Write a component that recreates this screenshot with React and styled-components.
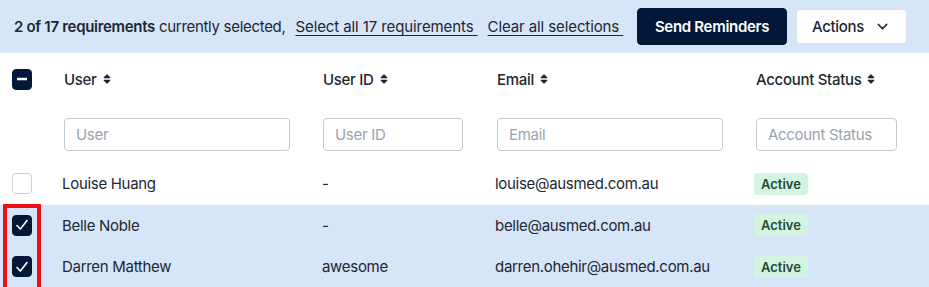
import React from "react";
import styled, { createGlobalStyle } from "styled-components";
import { FaSort } from "react-icons/fa";
import { FiChevronDown } from "react-icons/fi";

const Global = createGlobalStyle`
  html, body { margin: 0; padding: 0; background: #fff; }
  body {
    font-family: Inter, "Noto Sans", "Liberation Sans", sans-serif;
    color: #1e2633;
    letter-spacing: -0.3px;
    -webkit-font-smoothing: antialiased;
  }
`;

const Page = styled.div`
  width: 929px;
  height: 287px;
  overflow: hidden;
  position: relative;
`;

const SelectionBar = styled.div`
  display: flex;
  align-items: center;
  height: 53px;
  padding: 0 22px 0 14px;
  background: #d7e5f8;
  font-size: 15px;
  white-space: nowrap;
  & > * { flex-shrink: 0; }
`;

const Summary = styled.span`
  color: #1e2633;
  b { font-weight: 600; }
`;

const LinkText = styled.a`
  color: #1e2633;
  text-decoration: underline;
  text-underline-offset: 3px;
  white-space: pre;
  letter-spacing: -0.1px;
  margin-left: ${(p) => p.$gap || 0}px;
  cursor: pointer;
`;

const Spacer = styled.div`
  flex: 1;
`;

const Button = styled.button`
  display: flex;
  align-items: center;
  justify-content: center;
  gap: 10px;
  box-sizing: border-box;
  width: ${(p) => p.$w}px;
  height: ${(p) => (p.$primary ? 37 : 35)}px;
  margin-left: ${(p) => p.$gap || 0}px;
  border-radius: 4px;
  font-family: inherit;
  letter-spacing: inherit;
  font-size: 15px;
  font-weight: ${(p) => (p.$primary ? 600 : 500)};
  color: ${(p) => (p.$primary ? "#fff" : "#1e2633")};
  background: ${(p) => (p.$primary ? "#031838" : "#fff")};
  border: 1px solid ${(p) => (p.$primary ? "#031838" : "#dde2ea")};
  white-space: nowrap;
`;

const Table = styled.div`
  position: relative;
`;

const Row = styled.div`
  display: grid;
  grid-template-columns: 64px 259px 174px 259px 1fr;
  align-items: center;
  height: ${(p) => p.$h}px;
  background: ${(p) => (p.$selected ? "#d7e5f8" : "#fff")};
  font-size: 15px;
`;

const HeadCell = styled.div`
  display: flex;
  align-items: center;
  gap: 4px;
  font-weight: 500;
  color: #1e2633;
  svg { font-size: 12px; }
`;

const Cell = styled.div`
  margin-left: ${(p) => p.$shift || 0}px;
  white-space: nowrap;
`;

const CheckCell = styled.div`
  padding-left: 12px;
  display: flex;
  align-items: center;
`;

const Box = styled.div`
  width: 20px;
  height: 21px;
  box-sizing: border-box;
  border-radius: 4px;
  display: flex;
  align-items: center;
  justify-content: center;
  background: ${(p) => (p.$on ? "#031838" : "#fff")};
  border: 1px solid ${(p) => (p.$on ? "#031838" : "#c9ced7")};
`;

const Input = styled.input`
  box-sizing: border-box;
  width: ${(p) => p.$w}px;
  height: 33px;
  padding: 0 11px;
  border: 1px solid #c3c9d2;
  border-radius: 4px;
  font-family: inherit;
  letter-spacing: inherit;
  font-size: 15px;
  color: #1e2633;
  outline: none;
  &::placeholder { color: #9aa2af; }
`;

const Badge = styled.span`
  display: inline-block;
  padding: 3px 7px;
  margin-left: -2px;
  border-radius: 4px;
  background: #d4f4e2;
  color: #234a36;
  font-size: 13px;
  font-weight: 600;
  letter-spacing: 0;
`;

const Highlight = styled.div`
  position: absolute;
  left: 3px;
  top: ${(p) => p.$top}px;
  width: 38px;
  height: 100px;
  box-sizing: border-box;
  border: 4px solid #ec1119;
  pointer-events: none;
`;

const Minus = () => (
  <svg width="12" height="12" viewBox="0 0 12 12">
    <rect x="1" y="4.7" width="10" height="2.6" rx="0.6" fill="#fff" />
  </svg>
);

const Check = () => (
  <svg width="14" height="14" viewBox="0 0 14 14">
    <path d="M2 7.5 L5.4 11 L12 2.6" fill="none" stroke="#fff" strokeWidth="1.6" strokeLinecap="round" strokeLinejoin="round" />
  </svg>
);

const users = [
  { name: "Louise Huang", id: "-", email: "louise@ausmed.com.au", selected: false },
  { name: "Belle Noble", id: "-", email: "belle@ausmed.com.au", selected: true },
  { name: "Darren Matthew", id: "awesome", email: "darren.ohehir@ausmed.com.au", selected: true },
];

export default function App() {
  return (
    <Page>
      <Global />
      <SelectionBar>
        <Summary>
          <b>2 of 17 requirements</b> currently selected,
        </Summary>
        <LinkText $gap={10}>Select all 17 requirements </LinkText>
        <LinkText $gap={10}>Clear all selections </LinkText>
        <Spacer />
        <Button $primary $w={150}>Send Reminders</Button>
        <Button $gap={9} $w={111}>
          Actions <FiChevronDown size={17} />
        </Button>
      </SelectionBar>
      <Table>
        <Row $h={52}>
          <CheckCell>
            <Box $on>
              <Minus />
            </Box>
          </CheckCell>
          <HeadCell>User <FaSort /></HeadCell>
          <HeadCell>User ID <FaSort /></HeadCell>
          <HeadCell>Email <FaSort /></HeadCell>
          <HeadCell>Account Status <FaSort /></HeadCell>
        </Row>
        <Row $h={58}>
          <div />
          <Cell><Input placeholder="User" $w={226} /></Cell>
          <Cell><Input placeholder="User ID" $w={140} /></Cell>
          <Cell><Input placeholder="Email" $w={226} /></Cell>
          <Cell><Input placeholder="Account Status" $w={141} /></Cell>
        </Row>
        {users.map((u) => (
          <Row key={u.email} $h={41.5} $selected={u.selected}>
            <CheckCell>
              <Box $on={u.selected}>{u.selected && <Check />}</Box>
            </CheckCell>
            <Cell $shift={-2}>{u.name}</Cell>
            <Cell $shift={-1}>{u.id}</Cell>
            <Cell $shift={-2}>{u.email}</Cell>
            <Cell>
              <Badge>Active</Badge>
            </Cell>
          </Row>
        ))}
        <Highlight $top={151} />
      </Table>
    </Page>
  );
}
